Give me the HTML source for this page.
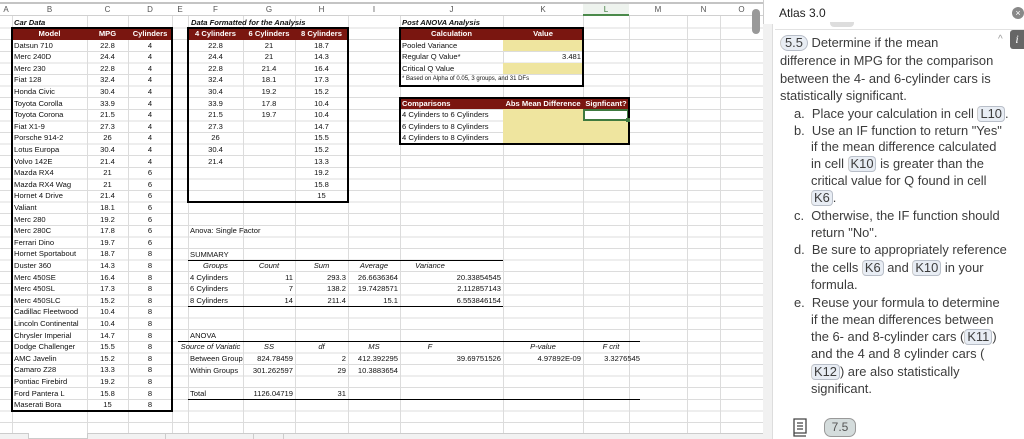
<!DOCTYPE html>
<html><head><meta charset="utf-8"><style>
*{margin:0;padding:0;box-sizing:border-box}
body{width:1024px;height:439px;overflow:hidden;background:#fff;position:relative;font-family:"Liberation Sans",sans-serif}
.sheet{position:absolute;left:0;top:0;width:763px;height:439px;overflow:hidden;
background-image:repeating-linear-gradient(to bottom,transparent 0,transparent 10.6px,#dcdcdc 10.6px,#dcdcdc 11.6px);background-position:0 16.5px;background-repeat:repeat-x;background-size:100% 100%}
.v{position:absolute;top:4px;width:1px;height:430px;background:#dcdcdc}
.ch{position:absolute;top:4px;height:12px;font-size:8px;color:#555;text-align:center;line-height:12px;background:#fff;border-bottom:1px solid #d0d0d0}
.t{position:absolute;font-size:7.6px;line-height:11.6px;color:#111;white-space:nowrap}
table{position:absolute;border-collapse:collapse;table-layout:fixed;font-size:7.6px;color:#111}
td{height:11.6px;line-height:11.6px;padding:0 2px;white-space:nowrap;overflow:hidden}
.h td{background:#7a1610;color:#fff;font-weight:bold;text-align:center}
.box{position:absolute;border:2px solid #000}
.c{text-align:center}.r{text-align:right}
.y{background:#efe59f}
.ln{position:absolute;height:1.5px;background:#000}
.i{font-style:italic;text-align:center}
.p{position:absolute;font-size:12.9px;color:#3c3c3c;white-space:nowrap;line-height:17.3px}
.k{display:inline-block;border:1px solid #b8bec8;border-left-color:#ccc;background:#e8edf4;border-radius:4px;padding:0 2px;line-height:14px}
</style></head><body>
<div style="position:absolute;left:0;top:2px;width:763px;height:2px;background:#c4c4c4"></div>
<div class="sheet">
<div class="v" style="left:12px"></div><div class="v" style="left:87px"></div><div class="v" style="left:128px"></div><div class="v" style="left:172px"></div><div class="v" style="left:188px"></div><div class="v" style="left:243px"></div><div class="v" style="left:295px"></div><div class="v" style="left:348px"></div><div class="v" style="left:400px"></div><div class="v" style="left:503px"></div><div class="v" style="left:583px"></div><div class="v" style="left:629px"></div><div class="v" style="left:687px"></div><div class="v" style="left:720px"></div>
<div class="ch" style="left:0;width:12px">A</div><div class="ch" style="left:12px;width:75px">B</div><div class="ch" style="left:87px;width:41px">C</div><div class="ch" style="left:128px;width:44px">D</div><div class="ch" style="left:172px;width:16px">E</div><div class="ch" style="left:188px;width:55px">F</div><div class="ch" style="left:243px;width:52px">G</div><div class="ch" style="left:295px;width:53px">H</div><div class="ch" style="left:348px;width:52px">I</div><div class="ch" style="left:400px;width:103px">J</div><div class="ch" style="left:503px;width:80px">K</div><div class="ch" style="left:583px;width:46px;color:#3c7a3c;border-bottom:2px solid #4b8a4b;background:#eef3ee">L</div><div class="ch" style="left:629px;width:58px">M</div><div class="ch" style="left:687px;width:33px">N</div><div class="ch" style="left:720px;width:43px">O</div>
<div style="position:absolute;left:752px;top:9px;width:8px;height:25px;border-radius:4px;background:#999"></div>

<div class="t" style="left:14px;top:16.5px;font-weight:bold;font-style:italic">Car Data</div>
<div class="t" style="left:191px;top:16.5px;font-weight:bold;font-style:italic">Data Formatted for the Analysis</div>
<div class="t" style="left:402px;top:16.5px;font-weight:bold;font-style:italic">Post ANOVA Analysis</div>

<table style="left:12px;top:28.1px;width:160px"><colgroup><col style="width:75px"><col style="width:41px"><col style="width:44px"></colgroup>
<tr class="h"><td>Model</td><td>MPG</td><td>Cylinders</td></tr>
<tr><td>Datsun 710</td><td class="c">22.8</td><td class="c">4</td></tr>
<tr><td>Merc 240D</td><td class="c">24.4</td><td class="c">4</td></tr>
<tr><td>Merc 230</td><td class="c">22.8</td><td class="c">4</td></tr>
<tr><td>Fiat 128</td><td class="c">32.4</td><td class="c">4</td></tr>
<tr><td>Honda Civic</td><td class="c">30.4</td><td class="c">4</td></tr>
<tr><td>Toyota Corolla</td><td class="c">33.9</td><td class="c">4</td></tr>
<tr><td>Toyota Corona</td><td class="c">21.5</td><td class="c">4</td></tr>
<tr><td>Fiat X1-9</td><td class="c">27.3</td><td class="c">4</td></tr>
<tr><td>Porsche 914-2</td><td class="c">26</td><td class="c">4</td></tr>
<tr><td>Lotus Europa</td><td class="c">30.4</td><td class="c">4</td></tr>
<tr><td>Volvo 142E</td><td class="c">21.4</td><td class="c">4</td></tr>
<tr><td>Mazda RX4</td><td class="c">21</td><td class="c">6</td></tr>
<tr><td>Mazda RX4 Wag</td><td class="c">21</td><td class="c">6</td></tr>
<tr><td>Hornet 4 Drive</td><td class="c">21.4</td><td class="c">6</td></tr>
<tr><td>Valiant</td><td class="c">18.1</td><td class="c">6</td></tr>
<tr><td>Merc 280</td><td class="c">19.2</td><td class="c">6</td></tr>
<tr><td>Merc 280C</td><td class="c">17.8</td><td class="c">6</td></tr>
<tr><td>Ferrari Dino</td><td class="c">19.7</td><td class="c">6</td></tr>
<tr><td>Hornet Sportabout</td><td class="c">18.7</td><td class="c">8</td></tr>
<tr><td>Duster 360</td><td class="c">14.3</td><td class="c">8</td></tr>
<tr><td>Merc 450SE</td><td class="c">16.4</td><td class="c">8</td></tr>
<tr><td>Merc 450SL</td><td class="c">17.3</td><td class="c">8</td></tr>
<tr><td>Merc 450SLC</td><td class="c">15.2</td><td class="c">8</td></tr>
<tr><td>Cadillac Fleetwood</td><td class="c">10.4</td><td class="c">8</td></tr>
<tr><td>Lincoln Continental</td><td class="c">10.4</td><td class="c">8</td></tr>
<tr><td>Chrysler Imperial</td><td class="c">14.7</td><td class="c">8</td></tr>
<tr><td>Dodge Challenger</td><td class="c">15.5</td><td class="c">8</td></tr>
<tr><td>AMC Javelin</td><td class="c">15.2</td><td class="c">8</td></tr>
<tr><td>Camaro Z28</td><td class="c">13.3</td><td class="c">8</td></tr>
<tr><td>Pontiac Firebird</td><td class="c">19.2</td><td class="c">8</td></tr>
<tr><td>Ford Pantera L</td><td class="c">15.8</td><td class="c">8</td></tr>
<tr><td>Maserati Bora</td><td class="c">15</td><td class="c">8</td></tr>
</table>
<div class="box" style="left:11px;top:27px;width:162px;height:385px"></div>

<table style="left:188px;top:28.1px;width:160px"><colgroup><col style="width:55px"><col style="width:52px"><col style="width:53px"></colgroup>
<tr class="h"><td>4 Cylinders</td><td>6 Cylinders</td><td>8 Cylinders</td></tr>
<tr><td class="c">22.8</td><td class="c">21</td><td class="c">18.7</td></tr>
<tr><td class="c">24.4</td><td class="c">21</td><td class="c">14.3</td></tr>
<tr><td class="c">22.8</td><td class="c">21.4</td><td class="c">16.4</td></tr>
<tr><td class="c">32.4</td><td class="c">18.1</td><td class="c">17.3</td></tr>
<tr><td class="c">30.4</td><td class="c">19.2</td><td class="c">15.2</td></tr>
<tr><td class="c">33.9</td><td class="c">17.8</td><td class="c">10.4</td></tr>
<tr><td class="c">21.5</td><td class="c">19.7</td><td class="c">10.4</td></tr>
<tr><td class="c">27.3</td><td></td><td class="c">14.7</td></tr>
<tr><td class="c">26</td><td></td><td class="c">15.5</td></tr>
<tr><td class="c">30.4</td><td></td><td class="c">15.2</td></tr>
<tr><td class="c">21.4</td><td></td><td class="c">13.3</td></tr>
<tr><td></td><td></td><td class="c">19.2</td></tr>
<tr><td></td><td></td><td class="c">15.8</td></tr>
<tr><td></td><td></td><td class="c">15</td></tr>
</table>
<div class="box" style="left:187px;top:27px;width:162px;height:176px"></div>

<table style="left:400px;top:28.1px;width:183px"><colgroup><col style="width:103px"><col style="width:80px"></colgroup>
<tr class="h"><td>Calculation</td><td>Value</td></tr>
<tr><td>Pooled Variance</td><td class="y"></td></tr>
<tr><td>Regular Q Value*</td><td class="r">3.481</td></tr>
<tr><td>Critical Q Value</td><td class="y"></td></tr>
<tr><td colspan="2" style="font-size:6px">* Based on Alpha of 0.05, 3 groups, and 31 DFs</td></tr>
</table>
<div class="box" style="left:399px;top:27px;width:185px;height:60px"></div>

<table style="left:400px;top:97.7px;width:229px"><colgroup><col style="width:103px"><col style="width:80px"><col style="width:46px"></colgroup>
<tr class="h"><td style="text-align:left">Comparisons</td><td>Abs Mean Difference</td><td>Signficant?</td></tr>
<tr><td>4 Cylinders to 6 Cylinders</td><td class="y"></td><td style="outline:2px solid #3f7a3f;outline-offset:-2px"></td></tr>
<tr><td>6 Cylinders to 8 Cylinders</td><td class="y"></td><td class="y"></td></tr>
<tr><td>4 Cylinders to 8 Cylinders</td><td class="y"></td><td class="y"></td></tr>
</table>
<div class="box" style="left:399px;top:97px;width:231px;height:48px"></div>
<div style="position:absolute;left:626px;top:118px;width:4px;height:4px;background:#3f7a3f"></div>

<div class="t" style="left:190px;top:225.3px">Anova: Single Factor</div>
<div class="t" style="left:190px;top:248.5px">SUMMARY</div>
<div class="ln" style="left:188px;top:259.5px;width:315px"></div>
<div class="t i" style="left:188px;top:260.1px;width:55px">Groups</div>
<div class="t i" style="left:243px;top:260.1px;width:52px">Count</div>
<div class="t i" style="left:295px;top:260.1px;width:53px">Sum</div>
<div class="t i" style="left:348px;top:260.1px;width:52px">Average</div>
<div class="t i" style="left:400px;top:260.1px;width:60px">Variance</div>
<div class="t" style="left:190px;top:271.7px">4 Cylinders</div><div class="t r" style="left:243px;top:271.7px;width:50px">11</div><div class="t r" style="left:295px;top:271.7px;width:51px">293.3</div><div class="t r" style="left:348px;top:271.7px;width:50px">26.6636364</div><div class="t r" style="left:400px;top:271.7px;width:101px">20.33854545</div>
<div class="t" style="left:190px;top:283.3px">6 Cylinders</div><div class="t r" style="left:243px;top:283.3px;width:50px">7</div><div class="t r" style="left:295px;top:283.3px;width:51px">138.2</div><div class="t r" style="left:348px;top:283.3px;width:50px">19.7428571</div><div class="t r" style="left:400px;top:283.3px;width:101px">2.112857143</div>
<div class="t" style="left:190px;top:294.9px">8 Cylinders</div><div class="t r" style="left:243px;top:294.9px;width:50px">14</div><div class="t r" style="left:295px;top:294.9px;width:51px">211.4</div><div class="t r" style="left:348px;top:294.9px;width:50px">15.1</div><div class="t r" style="left:400px;top:294.9px;width:101px">6.553846154</div>
<div class="ln" style="left:188px;top:305.8px;width:315px;height:1px"></div>

<div class="t" style="left:190px;top:329.7px">ANOVA</div>
<div class="ln" style="left:178px;top:340.6px;width:462px"></div>
<div class="t i" style="left:178px;top:341.3px;width:65px;overflow:hidden">Source of Variatic</div>
<div class="t i" style="left:243px;top:341.3px;width:52px">SS</div>
<div class="t i" style="left:295px;top:341.3px;width:53px">df</div>
<div class="t i" style="left:348px;top:341.3px;width:52px">MS</div>
<div class="t i" style="left:400px;top:341.3px;width:60px">F</div>
<div class="t i" style="left:503px;top:341.3px;width:80px">P-value</div>
<div class="t i" style="left:583px;top:341.3px;width:56px">F crit</div>
<div class="t" style="left:190px;top:352.9px;width:53px;overflow:hidden">Between Groups</div><div class="t r" style="left:243px;top:352.9px;width:50px">824.78459</div><div class="t r" style="left:295px;top:352.9px;width:51px">2</div><div class="t r" style="left:348px;top:352.9px;width:50px">412.392295</div><div class="t r" style="left:400px;top:352.9px;width:101px">39.69751526</div><div class="t r" style="left:503px;top:352.9px;width:78px">4.97892E-09</div><div class="t r" style="left:583px;top:352.9px;width:57px">3.3276545</div>
<div class="t" style="left:190px;top:364.5px;width:53px;overflow:hidden">Within Groups</div><div class="t r" style="left:243px;top:364.5px;width:50px">301.262597</div><div class="t r" style="left:295px;top:364.5px;width:51px">29</div><div class="t r" style="left:348px;top:364.5px;width:50px">10.3883654</div>
<div class="t" style="left:190px;top:387.7px">Total</div><div class="t r" style="left:243px;top:387.7px;width:50px">1126.04719</div><div class="t r" style="left:295px;top:387.7px;width:51px">31</div>
<div class="ln" style="left:188px;top:398.6px;width:452px;height:1px"></div>

<div style="position:absolute;left:0;top:433px;width:763px;height:6px;background:#f2f2f2;border-top:1px solid #ccc"></div>
<div style="position:absolute;left:28px;top:433px;width:60px;height:6px;background:#fff;border:1px solid #ccc;border-top:none"></div>
<div style="position:absolute;left:88px;top:434px;width:78px;height:5px;border-right:1px solid #ccc"></div>
<div style="position:absolute;left:166px;top:434px;width:88px;height:5px;border-right:1px solid #ccc"></div>
<div style="position:absolute;left:254px;top:434px;width:30px;height:5px;border-right:1px solid #ccc"></div>
</div>

<div style="position:absolute;left:763px;top:0;width:261px;height:439px;background:#fff;border-left:1px solid #ccc"></div>
<div style="position:absolute;left:763px;top:24px;width:10px;height:415px;background:#f1f1f1;border-right:1px solid #ddd"></div>
<div style="position:absolute;left:779px;top:6px;font-size:12px;color:#222;font-family:'Liberation Sans',sans-serif">Atlas 3.0</div>
<div style="position:absolute;left:1012px;top:7px;width:12px;height:12px;border-radius:6px;background:#888;color:#fff;font-size:9px;line-height:12px;text-align:center">×</div>
<div style="position:absolute;left:830px;top:22px;width:24px;height:5px;border-radius:0 0 4px 4px;background:#ddd"></div>
<div style="position:absolute;left:775px;top:29px;width:249px;height:1px;background:#e2e2e2"></div>
<div style="position:absolute;left:1010px;top:30px;width:14px;height:19px;border-radius:3px 0 0 3px;background:#666;color:#fff;font-size:12px;line-height:19px;text-align:center;font-style:italic;font-family:'Liberation Serif',serif">i</div>
<div style="position:absolute;left:998px;top:34px;font-size:10px;color:#999">^</div>

<div class="p" style="left:780px;top:34px"><span class="k" style="border-radius:8px;padding:0 4px">5.5</span> Determine if the mean</div>
<div class="p" style="left:780px;top:52px">difference in MPG for the comparison</div>
<div class="p" style="left:780px;top:69.5px">between the 4- and 6-cylinder cars is</div>
<div class="p" style="left:780px;top:87px">statistically significant.</div>
<div class="p" style="left:794px;top:104.5px">a.&nbsp; Place your calculation in cell <span class="k">L10</span>.</div>
<div class="p" style="left:794px;top:121.5px">b.&nbsp; Use an IF function to return "Yes"</div>
<div class="p" style="left:811px;top:138px">if the mean difference calculated</div>
<div class="p" style="left:811px;top:155px">in cell <span class="k">K10</span> is greater than the</div>
<div class="p" style="left:811px;top:172px">critical value for Q found in cell</div>
<div class="p" style="left:811px;top:189px"><span class="k">K6</span>.</div>
<div class="p" style="left:794px;top:207px">c.&nbsp; Otherwise, the IF function should</div>
<div class="p" style="left:811px;top:224px">return "No".</div>
<div class="p" style="left:794px;top:241px">d.&nbsp; Be sure to appropriately reference</div>
<div class="p" style="left:811px;top:258.5px">the cells <span class="k">K6</span> and <span class="k">K10</span> in your</div>
<div class="p" style="left:811px;top:276px">formula.</div>
<div class="p" style="left:794px;top:293.5px">e.&nbsp; Reuse your formula to determine</div>
<div class="p" style="left:811px;top:311px">if the mean differences between</div>
<div class="p" style="left:811px;top:328px">the 6- and 8-cylinder cars (<span class="k">K11</span>)</div>
<div class="p" style="left:811px;top:345px">and the 4 and 8 cylinder cars (</div>
<div class="p" style="left:811px;top:362.5px"><span class="k">K12</span>) are also statistically</div>
<div class="p" style="left:811px;top:380px">significant.</div>

<svg style="position:absolute;left:792px;top:418px" width="16" height="19" viewBox="0 0 16 19"><path d="M2 1h12v14H2zM2 15v3h12M5 5h6M5 8h6M5 11h6" fill="none" stroke="#444" stroke-width="1.3"/></svg>
<div style="position:absolute;left:824px;top:418px;width:32px;height:19px;border-radius:7px;background:#d4dcdc;border:1px solid #999;color:#555;font-size:12px;line-height:17px;text-align:center">7.5</div>
</body></html>
